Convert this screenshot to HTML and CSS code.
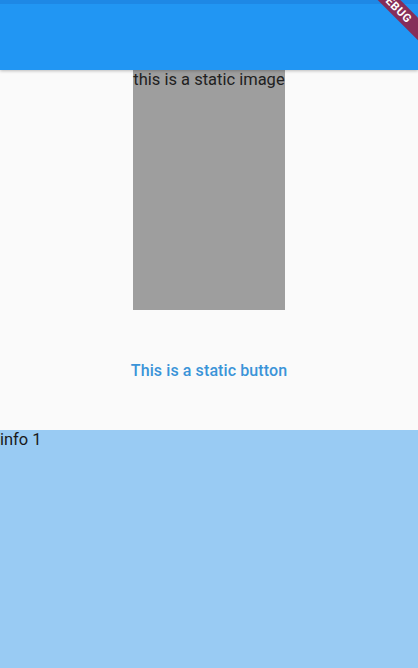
FILE: index.html
```html
<!DOCTYPE html>
<html>
<head>
<meta charset="utf-8">
<link rel="stylesheet" href="styles.css">
</head>
<body>
<div class="screen">
  <header class="appbar">
    <div class="statusbar"></div>
  </header>
  <main class="content">
    <div class="image-box">this is a static image</div>
    <div class="button-row">
      <span class="text-button">This is a static button</span>
    </div>
  </main>
  <section class="info-panel">info 1</section>
  <div class="debug-banner">DEBUG</div>
</div>
</body>
</html>
```
FILE: styles.css
```css
html, body {
  margin: 0;
  padding: 0;
  width: 418px;
  height: 668px;
  overflow: hidden;
}
body {
  font-family: Roboto, "Liberation Sans", sans-serif;
  background: #fafafa;
}
.screen {
  position: relative;
  width: 418px;
  height: 668px;
  display: flex;
  flex-direction: column;
  overflow: hidden;
}
.appbar {
  height: 70px;
  flex: none;
  background: #2196f3;
  box-shadow: 0 1px 3px rgba(0,0,0,0.25);
  position: relative;
  z-index: 1;
}
.statusbar {
  height: 4px;
  background: #1e88e5;
}
.content {
  height: 360px;
  flex: none;
  display: flex;
  flex-direction: column;
  align-items: center;
}
.image-box {
  height: 240px;
  background: #9e9e9e;
  color: #212121;
  font-size: 16.5px;
  line-height: 20px;
  white-space: nowrap;
}
.button-row {
  flex: 1;
  display: flex;
  align-items: center;
  justify-content: center;
}
.text-button {
  color: #3a94d8;
  font-weight: 500;
  font-size: 16px;
  letter-spacing: 0.1px;
}
.info-panel {
  flex: 1;
  background: #99cbf3;
  color: #1a1a1a;
  font-size: 16.5px;
  line-height: 20px;
}
.debug-banner {
  position: absolute;
  left: 346px;
  top: -1px;
  width: 100px;
  height: 16px;
  background: rgba(160, 20, 50, 0.8);
  color: #fff;
  font-weight: 700;
  font-size: 11.5px;
  line-height: 16px;
  text-align: center;
  letter-spacing: 0.5px;
  transform: rotate(45deg);
  z-index: 2;
}
```
